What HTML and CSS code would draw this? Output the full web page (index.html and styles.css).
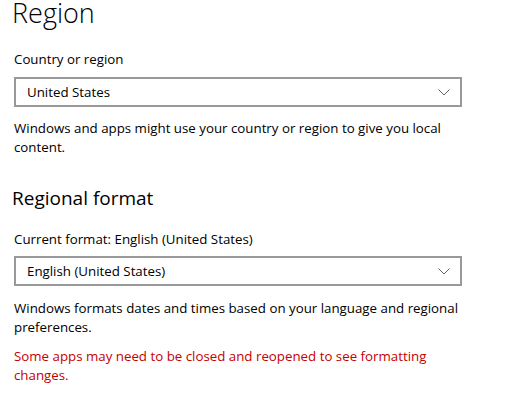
FILE: index.html
```html
<!DOCTYPE html>
<html lang="en">
<head>
    <meta charset="UTF-8">
    <meta name="viewport" content="width=device-width, initial-scale=1.0">
    <title>Region</title>
    <link rel="stylesheet" href="styles.css">
</head>
<body>
    <div class="page">
        <h1 class="title">Region</h1>

        <div class="field">
            <div class="label">Country or region</div>
            <div class="select">
                <span>United States</span>
                <svg class="chevron" width="12" height="7" viewBox="0 0 12 7">
                    <path d="M0.5 0.5 L6 6 L11.5 0.5" fill="none" stroke="#666" stroke-width="1"/>
                </svg>
            </div>
        </div>
        <p class="desc">Windows and apps might use your country or region to give you local content.</p>

        <h2 class="subtitle">Regional format</h2>

        <div class="field">
            <div class="label">Current format: English (United States)</div>
            <div class="select">
                <span>English (United States)</span>
                <svg class="chevron" width="12" height="7" viewBox="0 0 12 7">
                    <path d="M0.5 0.5 L6 6 L11.5 0.5" fill="none" stroke="#666" stroke-width="1"/>
                </svg>
            </div>
        </div>
        <p class="desc">Windows formats dates and times based on your language and regional preferences.</p>
        <p class="desc warning">Some apps may need to be closed and reopened to see formatting changes.</p>
    </div>
</body>
</html>
```

FILE: styles.css
```css
body {
    margin: 0;
    padding: 0;
    background-color: #ffffff;
    color: #000000;
    font-family: "Open Sans", "Noto Sans", sans-serif;
    font-size: 13.3px;
}
.page {
    padding: 0 14px;
    width: 448px;
}
.title {
    font-size: 27px;
    font-weight: 300;
    line-height: 26px;
    margin: 0 0 0 -2px;
}
.field {
    margin-top: 24px;
}
.label {
    line-height: 19px;
    margin-bottom: 8px;
}
.select {
    box-sizing: border-box;
    height: 30px;
    border: 2px solid #999999;
    display: flex;
    align-items: center;
    justify-content: space-between;
    padding: 0 10px 0 11px;
}
.chevron {
    display: block;
}
.desc {
    line-height: 19px;
    margin: 12px 0 0;
}
.subtitle {
    font-size: 19px;
    font-weight: 400;
    line-height: 26px;
    margin: 28px 0 0 -2px;
}
.subtitle + .field {
    margin-top: 19px;
}
.subtitle + .field .label {
    margin-bottom: 7px;
}
.subtitle + .field + .desc {
    margin-top: 13px;
}
.warning {
    color: #c50000;
    margin-top: 10px;
}
```
